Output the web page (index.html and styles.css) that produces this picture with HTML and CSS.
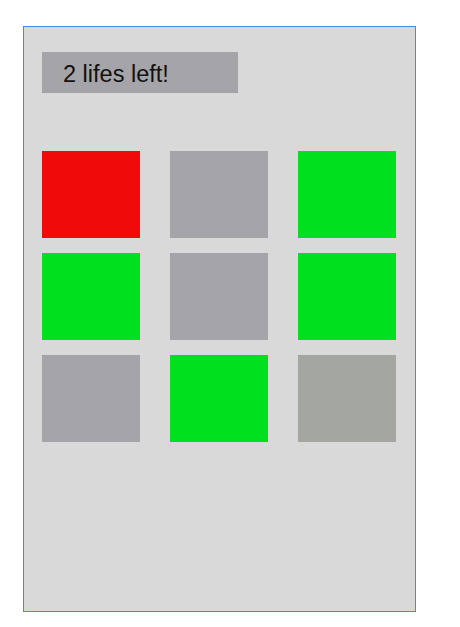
FILE: index.html
```html
<!DOCTYPE html>
<html>
<head>
<meta charset="utf-8">
<link rel="stylesheet" href="styles.css">
</head>
<body>
<div class="board">
  <div class="lives">2 lifes left!</div>
  <div class="grid">
    <div class="cell red"></div>
    <div class="cell gray"></div>
    <div class="cell green"></div>
    <div class="cell green"></div>
    <div class="cell gray"></div>
    <div class="cell green"></div>
    <div class="cell gray"></div>
    <div class="cell green"></div>
    <div class="cell stone"></div>
  </div>
</div>
</body>
</html>
```
FILE: styles.css
```css
html, body {
  margin: 0;
  padding: 0;
  background: #ffffff;
}
body {
  font-family: "Liberation Sans", Arial, sans-serif;
}
.board {
  box-sizing: border-box;
  margin-left: 23px;
  margin-top: 26px;
  width: 393px;
  height: 586px;
  border: 1px solid #3d8cf5;
  background: #d9d9d9;
  padding: 25px 19px 0 18px;
}
.lives {
  box-sizing: border-box;
  width: 195.5px;
  height: 41px;
  background: #a5a4a8;
  color: #111111;
  font-size: 23.5px;
  line-height: 37px;
  padding: 4px 0 0 21px;
}
.grid {
  margin-top: 58px;
  width: 354px;
  display: grid;
  grid-template-columns: repeat(3, 1fr);
  grid-auto-rows: 86.5px;
  column-gap: 29.5px;
  row-gap: 15.5px;
}
.red { background: #f00a0a; }
.green { background: #00e01e; }
.gray { background: #a5a4a8; }
.stone { background: #a4a6a2; }
```
